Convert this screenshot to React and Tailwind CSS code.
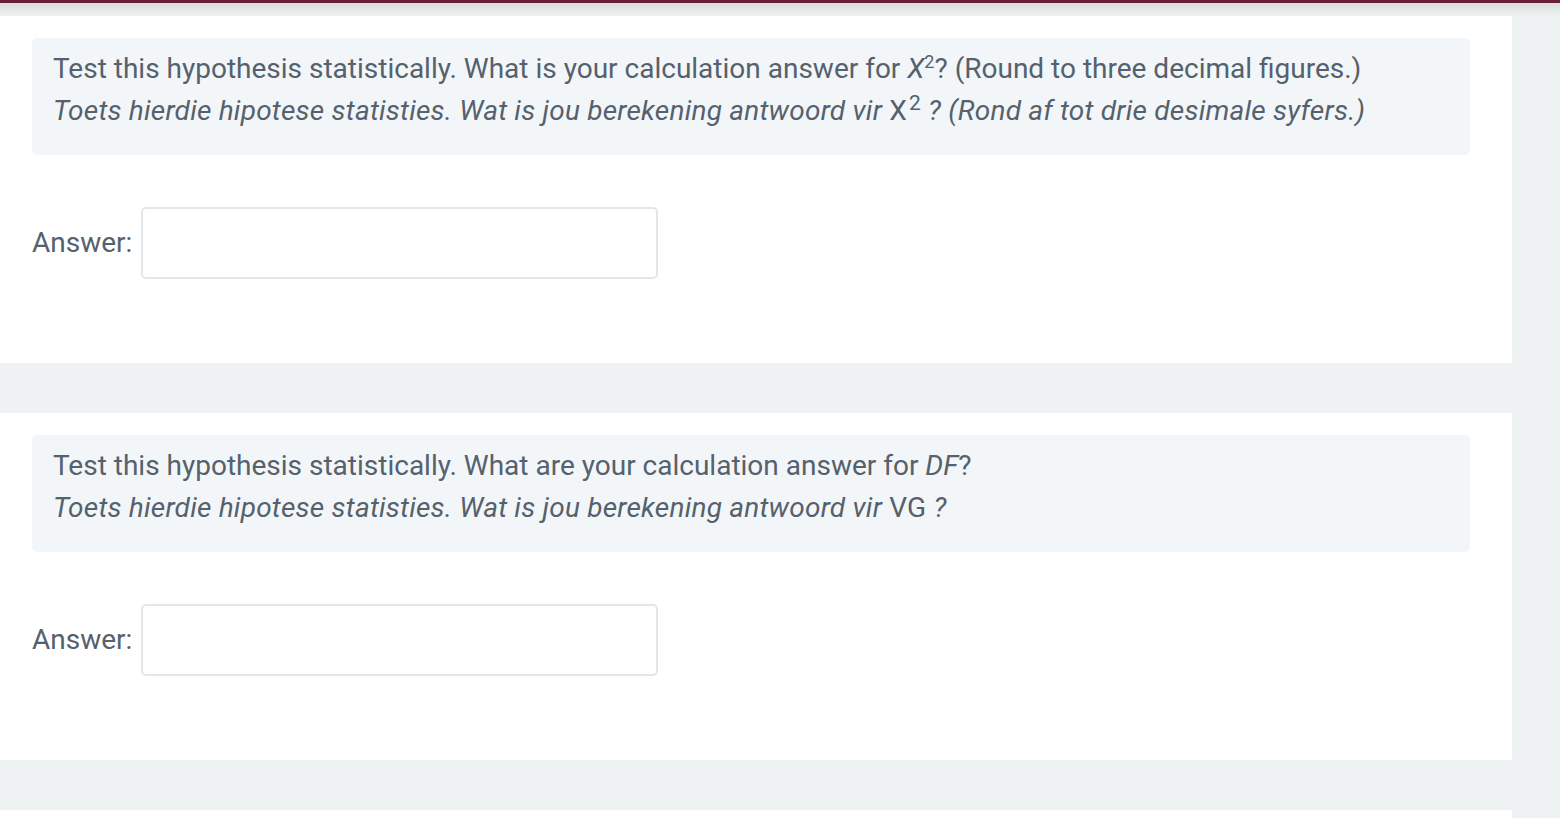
import React from "react";

function Question({ line1, line2 }) {
  return (
    <div className="bg-white w-[1512px] pl-8 pt-[22px] h-[347px]">
      <div className="bg-[#f2f6f9] rounded-[5px] w-[1438px] h-[117px] pl-[21px] pt-[10px] text-[28px] leading-[42px] text-[#55616c]">
        <div>{line1}</div>
        <div className="italic tracking-[0.22px]">{line2}</div>
      </div>
      <div className="flex items-center mt-[52px]">
        <span className="text-[28px] text-[#55616c] mr-[9px]">Answer:</span>
        <div className="w-[517px] h-[72px] border-2 border-[#e3e7ea] rounded-[5px] bg-white"></div>
      </div>
    </div>
  );
}

export default function App() {
  return (
    <div
      className="w-[1560px] h-[818px] overflow-hidden bg-[#eef2f3]"
      style={{ fontFamily: "Roboto, 'Liberation Sans', sans-serif" }}
    >
      <div className="h-[3px] bg-[#6a2037]"></div>
      <div className="h-[13px] bg-gradient-to-b from-[#d9dcdd] to-[#eef2f3]"></div>
      <div className="flex flex-col gap-[50px]">
        <Question
          line1={
            <>
              Test this hypothesis statistically. What is your calculation answer for{" "}
              <i>X</i>
              <sup className="text-[18px] top-[-0.55em]">2</sup>? (Round to three decimal figures.)
            </>
          }
          line2={
            <>
              Toets hierdie hipotese statisties. Wat is jou berekening antwoord vir{" "}
              <span className="not-italic">X</span>
              <sup className="not-italic text-[21px] top-[-0.5em] ml-[2px]">2</sup> ? (Rond af tot drie desimale syfers.)
            </>
          }
        />
        <Question
          line1={
            <>
              Test this hypothesis statistically. What are your calculation answer for <i>DF</i>?
            </>
          }
          line2={
            <>
              Toets hierdie hipotese statisties. Wat is jou berekening antwoord vir{" "}
              <span className="not-italic">VG</span> ?
            </>
          }
        />
        <div className="bg-white w-[1512px] h-[100px]"></div>
      </div>
    </div>
  );
}
